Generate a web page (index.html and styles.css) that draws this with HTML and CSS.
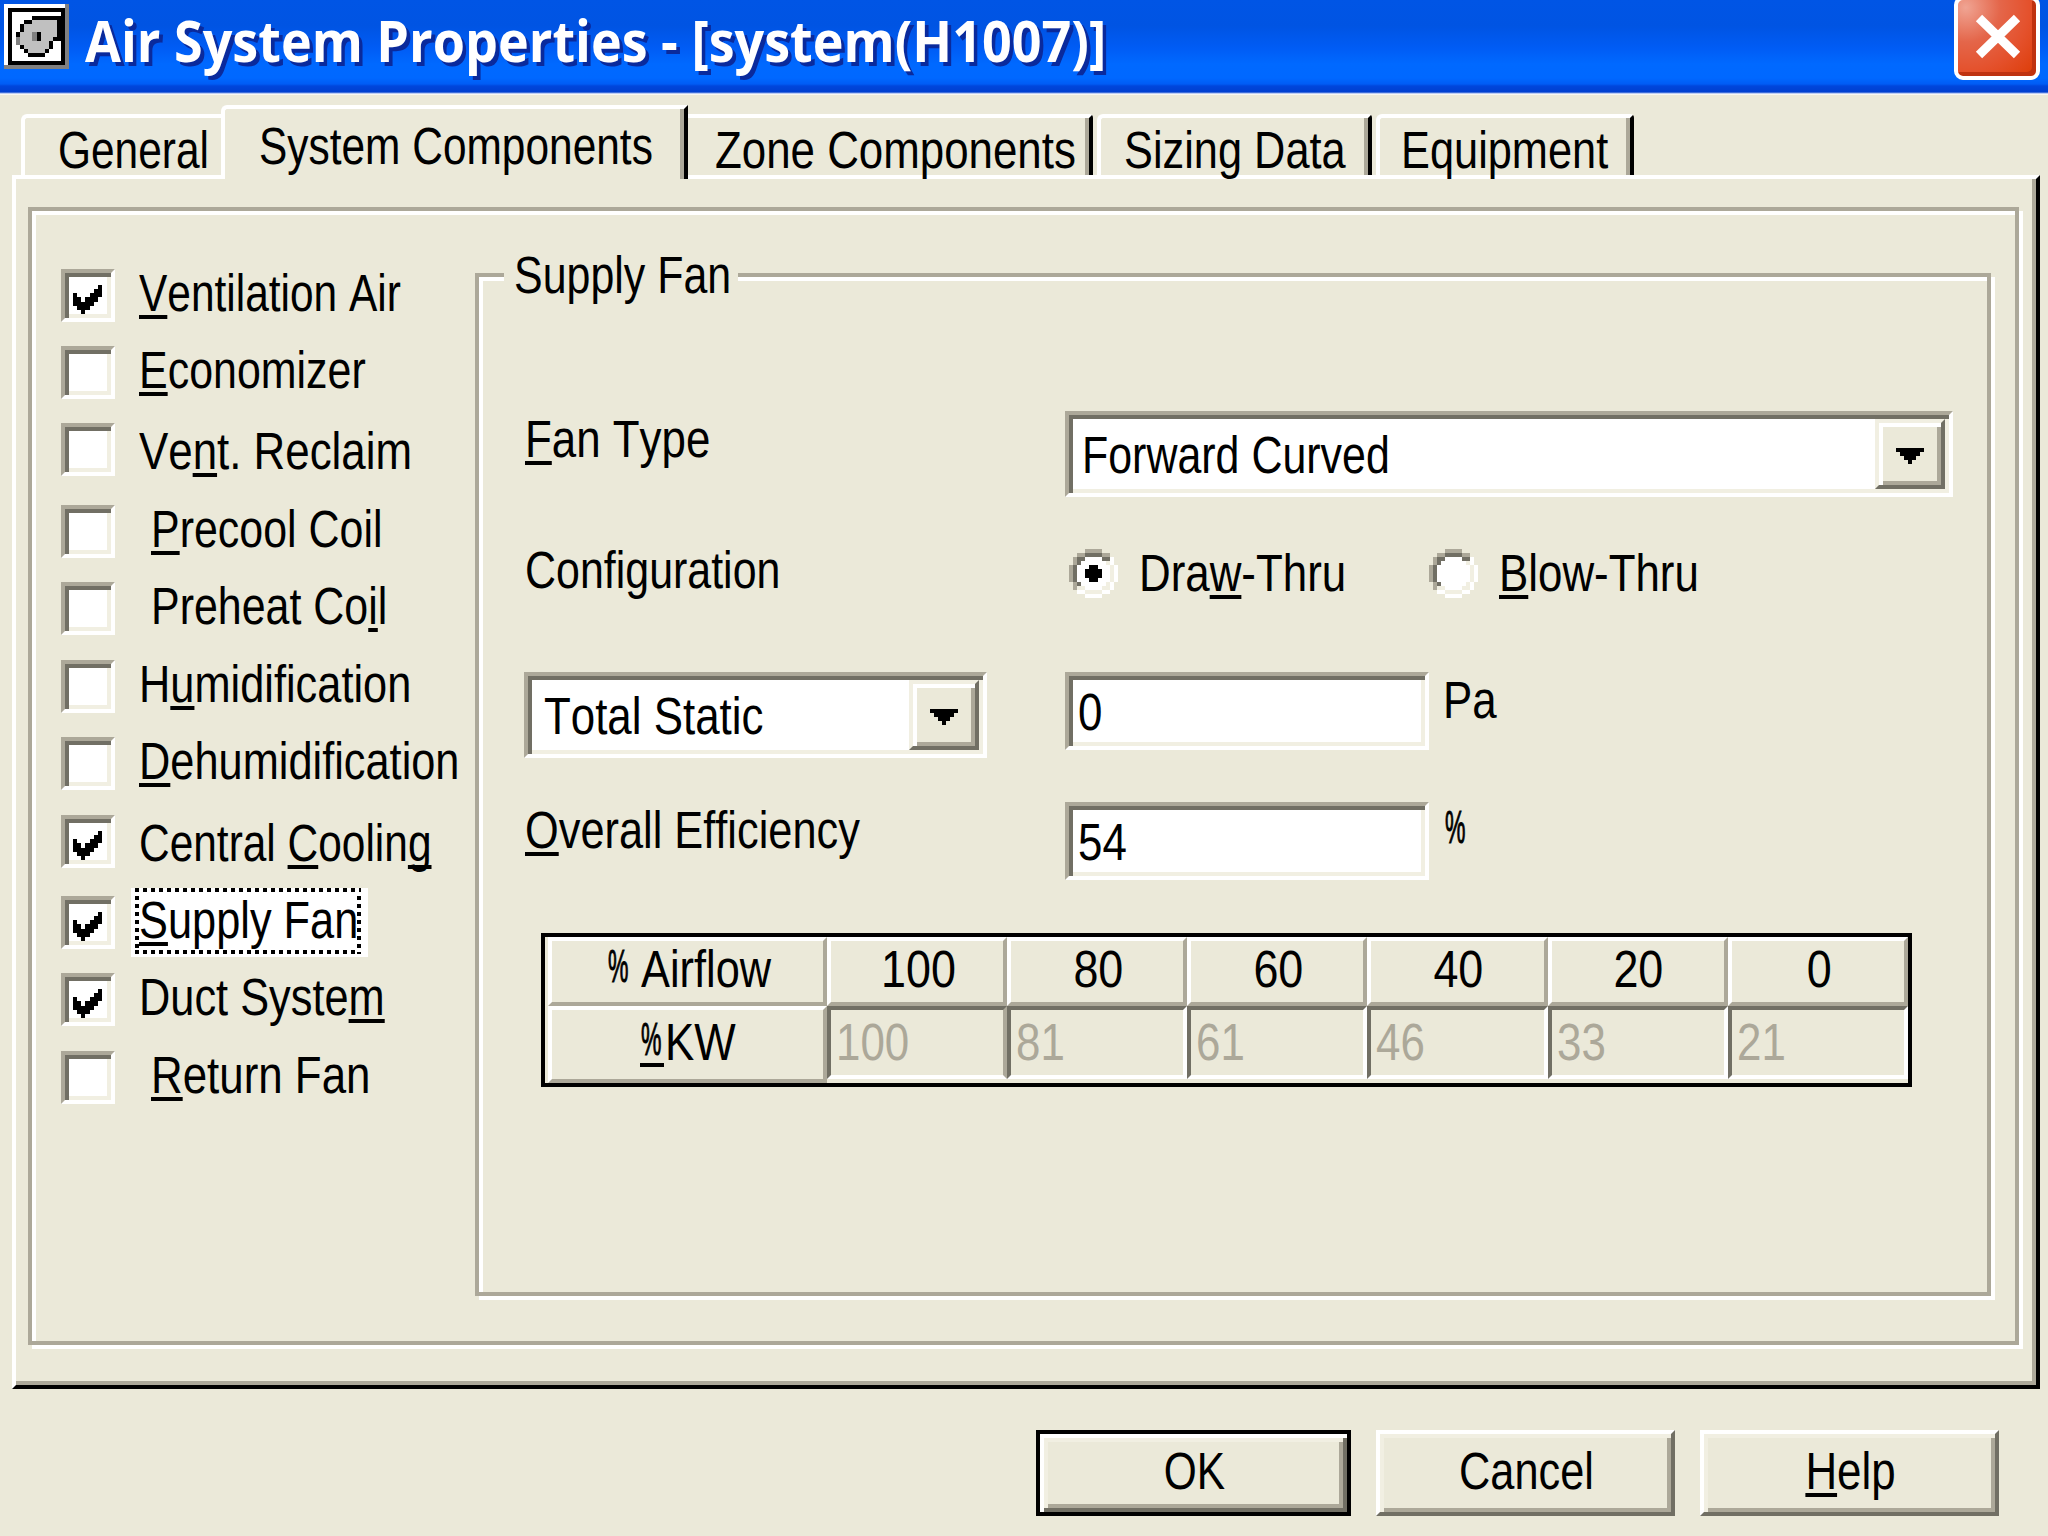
FILE: index.html
```html
<!DOCTYPE html>
<html lang="en">
<head>
<meta charset="utf-8">
<title>Air System Properties - [system(H1007)]</title>
<link rel="stylesheet" href="styles.css">
</head>
<body>
<svg class="defs" aria-hidden="true">
  <symbol id="check" viewBox="0 0 7 7"><path d="M0 2h1v1h1v1h1v-1h1v-1h1v-1h1v-1h1v3h-1v1h-1v1h-1v1h-1v1h-1v-1h-1v-1h-1z"/></symbol>
  <symbol id="arrow" viewBox="0 0 7 4"><path d="M0 0h7v1h-1v1h-1v1h-1v1h-1v-1h-1v-1h-1v-1h-1z"/></symbol>
  <symbol id="ring" viewBox="0 0 12 12">
    <path fill="#fff" d="M4 2h4v1h1v1h1v4h-1v1h-1v1h-4v-1h-1v-1h-1v-4h1v-1h1z"/>
    <path fill="#aca899" d="M4 0h4v1h-4zM2 1h2v1h-2zM8 1h2v1h-2zM1 2h1v2h-1zM0 4h1v4h-1zM1 8h1v2h-1z"/>
    <path fill="#716f64" d="M4 1h4v1h-4zM2 2h2v1h-2zM8 2h2v1h-2zM2 3h1v1h-1zM1 4h1v4h-1zM2 8h1v1h-1z"/>
    <path fill="#f1efe2" d="M9 3h1v1h-1zM10 4h1v4h-1zM9 8h1v1h-1zM2 9h2v1h-2zM8 9h2v1h-2zM4 10h4v1h-4z"/>
    <path fill="#fff" d="M10 2h1v2h-1zM11 4h1v4h-1zM10 8h1v2h-1zM8 10h2v1h-2zM4 11h4v1h-4zM2 10h2v1h-2z"/>
  </symbol>
</svg>

<header class="titlebar">
  <svg class="app-icon" viewBox="0 0 16 16" shape-rendering="crispEdges">
    <path fill="#808080" d="M0 0h16v16h-16z"/><path fill="#fff" d="M0 0h15v1h-14v14h-1z"/>
    <path d="M1 1h14v14h-14z"/><path fill="#fff" d="M2 2h12v12h-12z"/>
    <path fill="#c0c0c0" d="M7 4h6v4h-1v1h-1v2h-1v1h-4v-1h-1v-1h-1v-4h1v-1h2z"/>
    <path d="M7 3h7v6h-1v-5h-6zM5 4h2v1h-2zM4 5h1v2h-1zM3 7h1v1h-1zM4 10h1v1h-1zM5 11h1v1h-1zM6 12h4v1h-4zM10 11h1v1h-1zM11 9h1v2h-1zM12 8h1v1h-1zM8 7h1v2h-1z"/>
    <path fill="#808080" d="M3 8h1v2h-1zM7 7h1v2h-1z"/>
  </svg>
  <h1 class="title"><span>Air System Properties - [system(H1007)]</span></h1>
  <button class="close" aria-label="Close"><svg viewBox="0 0 46 45"><path d="M4 4L42 41M42 4L4 41"/></svg></button>
</header>

<nav class="tabs">
  <div class="tab tab-general"><span class="t x83">General</span></div>
  <div class="tab tab-system"><span class="t x83">System Components</span></div>
  <div class="tab tab-zone"><span class="t x86">Zone Components</span></div>
  <div class="tab tab-sizing"><span class="t x85">Sizing Data</span></div>
  <div class="tab tab-equipment"><span class="t x85">Equipment</span></div>
</nav>

<main class="page">
  <div class="frame">
    <ul class="options">
      <li><i class="box"><svg><use href="#check"/></svg></i><span class="t x83"><u>V</u>entilation Air</span></li>
      <li><i class="box"></i><span class="t x84"><u>E</u>conomizer</span></li>
      <li class="low"><i class="box"></i><span class="t x86">Ve<u>n</u>t. Reclaim</span></li>
      <li class="indent"><i class="box"></i><span class="t x84"><u>P</u>recool Coil</span></li>
      <li class="indent"><i class="box"></i><span class="t x84">Preheat Co<u>i</u>l</span></li>
      <li><i class="box"></i><span class="t x85">H<u>u</u>midification</span></li>
      <li><i class="box"></i><span class="t x85"><u>D</u>ehumidification</span></li>
      <li class="low"><i class="box"><svg><use href="#check"/></svg></i><span class="t x83">Central <u>C</u>oolin<u>g</u></span></li>
      <li class="focused"><i class="box"><svg><use href="#check"/></svg></i><span class="t x85"><u>S</u>upply Fan</span>
        <svg class="focus" viewBox="0 0 226 66"><path d="M0 2H226M0 64H224"/><path d="M2 8V66M224 8V66"/></svg></li>
      <li><i class="box"><svg><use href="#check"/></svg></i><span class="t x85">Duct Syste<u>m</u></span></li>
      <li class="indent"><i class="box"></i><span class="t x86"><u>R</u>eturn Fan</span></li>
    </ul>

    <section class="group">
      <h2 class="legend"><span class="t x84">Supply Fan</span></h2>
      <div class="row">
        <div class="name up"><span class="t x86"><u>F</u>an Type</span></div>
        <div class="sunken combo wide"><span class="t x84">Forward Curved</span><b class="drop"><svg><use href="#arrow"/></svg></b></div>
      </div>
      <div class="row">
        <div class="name"><span class="t x84">Configuration</span></div>
        <div class="radio"><svg viewBox="0 0 12 12"><use href="#ring"/><path d="M5 4h2v1h1v2h-1v1h-2v-1h-1v-2h1z"/></svg><span class="t x86">Dra<u>w</u>-Thru</span></div>
        <div class="radio"><svg viewBox="0 0 12 12"><use href="#ring"/></svg><span class="t x86"><u>B</u>low-Thru</span></div>
      </div>
      <div class="row">
        <div class="name"><div class="sunken combo small"><span class="t x86">Total Static</span><b class="drop"><svg><use href="#arrow"/></svg></b></div></div>
        <div class="sunken field"><span class="t x86">0</span></div>
        <div class="unit"><span class="t x86">Pa</span></div>
      </div>
      <div class="row">
        <div class="name up"><span class="t x85"><u>O</u>verall Efficiency</span></div>
        <div class="sunken field"><span class="t x86">54</span></div>
        <div class="unit"><span class="pct">%</span></div>
      </div>
      <div class="grid">
        <div class="head"><span class="pct">%</span><span class="t x85 airflow">Airflow</span></div>
        <div class="head num"><span class="t x88">100</span></div>
        <div class="head num"><span class="t x88">80</span></div>
        <div class="head num"><span class="t x88">60</span></div>
        <div class="head num"><span class="t x88">40</span></div>
        <div class="head num"><span class="t x88">20</span></div>
        <div class="head num"><span class="t x88">0</span></div>
        <div class="head side"><span class="pct key">%</span><span class="t x86 kw">KW</span></div>
        <div class="cell gray"><span class="t x86">100</span></div>
        <div class="cell gray"><span class="t x86">81</span></div>
        <div class="cell"><span class="t x86">61</span></div>
        <div class="cell"><span class="t x86">46</span></div>
        <div class="cell"><span class="t x86">33</span></div>
        <div class="cell"><span class="t x86">21</span></div>
      </div>
    </section>
  </div>
</main>

<footer class="actions">
  <button class="btn default"><span class="t x83">OK</span></button>
  <button class="btn"><span class="t x85">Cancel</span></button>
  <button class="btn"><span class="t x86"><u>H</u>elp</span></button>
</footer>
</body>
</html>
```
FILE: styles.css
```css
* { box-sizing: border-box; }
:root {
  --face: #ebe9d9;
  --shadow: #aca899;
  --dark: #716f64;
  --light: #f1efe2;
}
body {
  margin: 0;
  width: 2048px;
  height: 1536px;
  overflow: hidden;
  background: var(--face);
  color: #000;
  font: 51px/57px "Liberation Sans", Arial, sans-serif;
  font-kerning: none;
}
.defs { position: absolute; width: 0; height: 0; }
svg { display: block; shape-rendering: crispEdges; }
button { padding: 0; color: inherit; font: inherit; }

/* Condensed label text */
.t { display: block; padding-top: 1px; white-space: nowrap; transform-origin: 0 0; flex: none; }
.x83 { transform: scaleX(.832); }
.x84 { transform: scaleX(.842); }
.x85 { transform: scaleX(.85); }
.x86 { transform: scaleX(.86); }
.x88 { transform: scaleX(.88); }
u {
  text-decoration-thickness: 4px;
  text-underline-offset: 4px;
  text-decoration-skip-ink: none;
}
.pct {
  display: block;
  width: 20px;
  font-size: 46px;
  -webkit-text-stroke: 1px currentColor;
  transform: scaleX(.5);
  transform-origin: 0 0;
}

/* Title bar */
.titlebar {
  display: flex;
  height: 95px;
  padding-left: 4px;
  background: linear-gradient(#0055e5 0, #0054e3 26px, #005cf5 48px, #0069ff 64px, #0068ff 78px, #005cf5 84px, #0046dc 86px, #003fcf 92px, #7c9ce8 93px, #fff 94px, #f4f0e6 95px);
}
.app-icon { width: 65px; height: 65px; margin-top: 4px; }
.title {
  width: 1885px;
  margin: 1px 0 0 16px;
  color: #fff;
  font: bold 57px/78px "Open Sans", "Noto Sans", sans-serif;
  text-shadow: 4px 4px 0 #0a2a9c;
  white-space: nowrap;
}
.title span { display: inline-block; transform: scaleX(.914); transform-origin: 0 0; }
.close {
  width: 86px;
  height: 84px;
  margin: -4px 0 0 -16px;
  padding: 0 0 3px 1px;
  border: 4px solid #fff;
  border-radius: 9px;
  background: radial-gradient(circle at 10% 10%, #f0a493 0, #e4664a 35%, #e4512c 65%, #dc3a04 100%);
  box-shadow: inset -4px -4px 0 #bf3210;
}
.close svg { width: 46px; height: 45px; margin: 0 auto; shape-rendering: auto; overflow: visible; }
.close path { fill: none; stroke: #fff; stroke-width: 9; }

/* Tabs */
.tabs { display: flex; align-items: flex-end; height: 84px; padding: 10px 0 0 21px; margin-bottom: -4px; position: relative; }
.tab { height: 61px; margin-bottom: 4px; border-top: 4px solid #fff; padding-top: 3px; }
.tab-general { width: 200px; border-left: 4px solid #fff; border-top-left-radius: 6px; padding-left: 33px; }
.tab-system {
  width: 467px;
  height: 74px;
  margin-bottom: 0;
  padding: 8px 0 0 34px;
  border-left: 4px solid #fff;
  border-right: 4px solid #000;
  border-top-left-radius: 6px;
  box-shadow: inset -4px 0 0 var(--shadow);
  background: var(--face);
}
.tab-zone, .tab-sizing, .tab-equipment { border-right: 4px solid #000; box-shadow: inset -4px 0 0 var(--shadow); border-top-right-radius: 4px; }
.tab-zone { width: 405px; padding-left: 27px; }
.tab-sizing { width: 275px; margin-left: 4px; padding-left: 23px; border-left: 4px solid #fff; border-top-left-radius: 6px; }
.tab-equipment { width: 258px; margin-left: 4px; padding-left: 21px; border-left: 4px solid #fff; border-top-left-radius: 6px; }

/* Property page */
.page {
  width: 2028px;
  height: 1214px;
  margin-left: 12px;
  padding: 28px 0 0 12px;
  border: 4px solid #fff;
  border-right-color: #000;
  border-bottom-color: #000;
  box-shadow: inset -4px -4px 0 var(--shadow);
}
.frame, .group {
  border: 4px solid var(--shadow);
  box-shadow: 4px 4px 0 #fff, inset 4px 4px 0 #fff;
}
.frame { display: flex; width: 1991px; height: 1138px; }

/* Component checklist */
.options {
  display: grid;
  grid-template-rows: 77px 77px 82px 77px 78px 77px 78px 81px 77px 78px 77px;
  align-content: start;
  width: 443px;
  margin: 0;
  padding: 58px 0 0 29px;
  list-style: none;
}
.options li { display: flex; position: relative; }
.options .t { margin: -5px 0 0 24px; position: relative; z-index: 1; }
.options .low .t { margin-top: -1px; }
.options .indent .t { margin-left: 36px; }
.box, .sunken {
  border: 4px solid #fff;
  border-top-color: var(--shadow);
  border-left-color: var(--shadow);
  background: #fff;
  box-shadow: inset 4px 4px 0 var(--dark), inset -4px -4px 0 var(--light);
}
.box { width: 54px; height: 53px; flex: none; }
.box svg { width: 29px; height: 29px; margin: 12px 0 0 8px; }
.focus {
  position: absolute;
  left: 70px;
  top: -8px;
  width: 237px;
  height: 69px;
  padding: 0 7px 3px 4px;
  background: #fff;
}
.focus path { fill: none; stroke: #000; stroke-width: 4; stroke-dasharray: 4 4; }

/* Supply fan group */
.group { width: 1516px; height: 1023px; margin-top: 62px; }
.legend { width: 234px; height: 58px; margin: -31px 0 -1px 25px; padding-left: 10px; background: var(--face); font: inherit; }
.row { display: flex; height: 130px; padding-left: 45px; }
.row:nth-of-type(1) { margin-top: 108px; }
.row:nth-of-type(2), .row:nth-of-type(4) { height: 131px; }
.name { width: 541px; flex: none; }
.name.up { margin-top: -1px; }
.name > .t { margin-left: 1px; }
.combo { display: flex; justify-content: space-between; height: 86px; padding: 4px; }
.combo.wide { width: 888px; }
.combo.small { width: 463px; }
.combo .t { width: 0; margin: 7px 0 0 9px; }
.small .t { margin-left: 12px; }
.drop {
  display: flex;
  justify-content: center;
  width: 70px;
  height: 70px;
  padding: 25px 1px 0 0;
  border: 4px solid var(--light);
  border-right-color: var(--dark);
  border-bottom-color: var(--dark);
  background: var(--face);
  box-shadow: inset 4px 4px 0 #fff, inset -4px -4px 0 var(--shadow);
}
.drop svg { width: 28px; height: 16px; }
.radio { display: flex; width: 360px; padding: 8px 0 0 4px; }
.radio svg { width: 49px; height: 49px; flex: none; }
.radio .t { margin: -5px 0 0 21px; }
.field { width: 364px; height: 78px; padding: 7px 0 0 9px; }
.unit { padding: 0 0 0 14px; }
.unit .t { margin-top: -1px; }
.unit .pct { margin: -3px 0 0 2px; }

/* Airflow table */
.grid {
  display: grid;
  grid-template-columns: 279px repeat(6, 180.17px);
  grid-template-rows: 69px 77px;
  width: 1371px;
  height: 154px;
  margin-left: 62px;
  padding-left: 3px;
  border: 4px solid #000;
}
.head {
  display: flex;
  border: 4px solid #fff;
  border-right-color: var(--shadow);
  border-bottom-color: var(--shadow);
  padding-left: 56px;
}
.head .t { margin-top: -1px; }
.head .airflow { margin-left: 13px; }
.head .pct { margin-top: -3px; }
.head.num { justify-content: center; padding: 0 0 0 2px; }
.num .t { transform-origin: 50% 0; }
.side { padding-left: 89px; }
.side .t { margin-top: 3px; }
.side .pct { margin-top: 1px; position: relative; }
.key::after { content: ""; position: absolute; left: -2px; top: 52px; width: 48px; height: 4px; background: #000; }
.head .kw { margin-left: 4px; }
.cell {
  height: 73px;
  padding: 3px 0 0 5px;
  border: 4px solid #fff;
  border-top-color: var(--dark);
  border-left-color: var(--dark);
  color: var(--shadow);
}
.cell.gray:nth-child(9) { border-right-color: var(--shadow); }

/* Dialog buttons */
.actions { display: flex; gap: 25px; padding: 41px 0 0 1036px; }
.btn {
  width: 299px;
  height: 86px;
  border: 4px solid #fff;
  border-right-color: var(--dark);
  border-bottom-color: var(--dark);
  background: var(--face);
  box-shadow: inset 4px 4px 0 var(--light), inset -4px -4px 0 var(--shadow);
}
.btn .t { margin: -5px 0 0 2px; transform-origin: 50% 0; }
.btn.default {
  width: 315px;
  border-color: #000;
  box-shadow: inset 4px 4px 0 #fff, inset -4px -4px 0 var(--dark), inset 8px 8px 0 var(--light), inset -8px -8px 0 var(--shadow);
}
```
